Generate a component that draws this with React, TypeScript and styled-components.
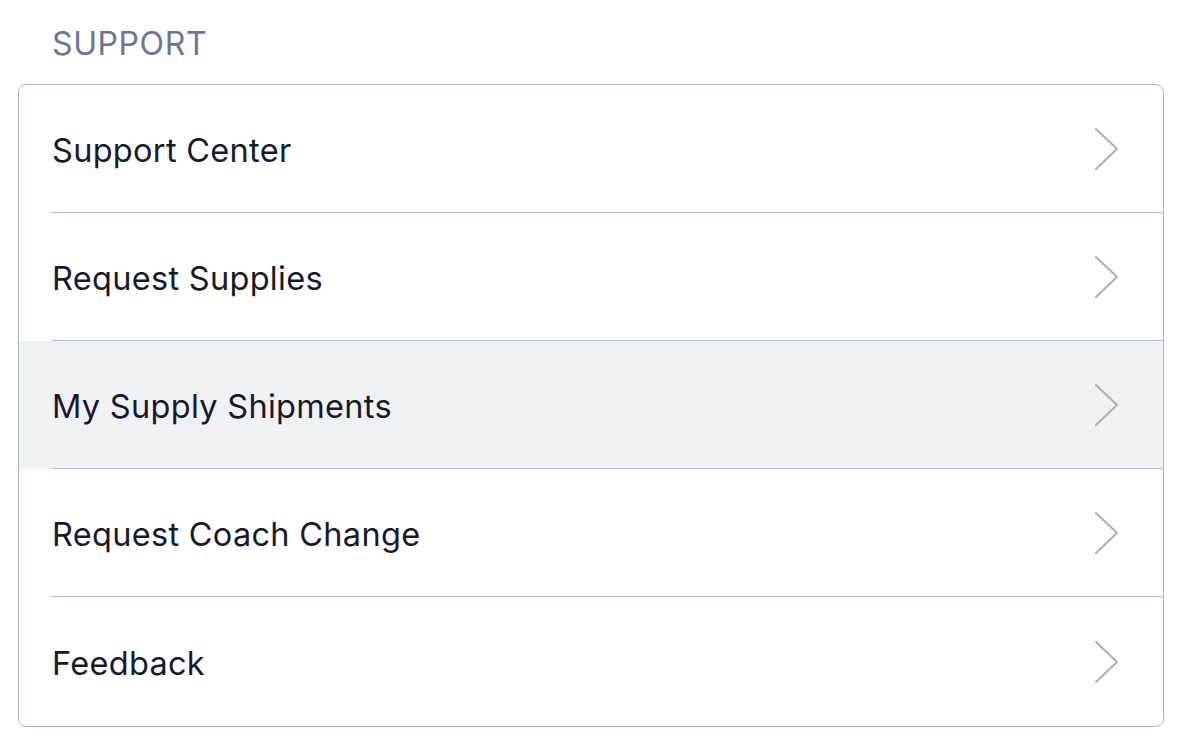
import React from "react";
import styled, { createGlobalStyle } from "styled-components";

const Global = createGlobalStyle`
  html, body { margin: 0; padding: 0; background: #ffffff; }
  body { font-family: Inter, "Noto Sans", sans-serif; }
`;

const Page = styled.div`
  padding: 24px 16px 0 18px;
`;

const Heading = styled.h2`
  margin: 0 0 20px 34px;
  font-family: Inter, "Noto Sans", sans-serif;
  font-weight: 400;
  font-size: 32px;
  line-height: 40px;
  letter-spacing: 0.6px;
  color: #66779a;
`;

const Card = styled.div`
  border: 1px solid #aeb7c9;
  border-radius: 8px;
  overflow: hidden;
  background: #ffffff;
`;

const Row = styled.div<{ $active?: boolean }>`
  padding-left: 33px;
  background: ${(p) => (p.$active ? "#f0f1f3" : "transparent")};
`;

const RowInner = styled.div<{ $last?: boolean }>`
  height: ${(p) => (p.$last ? "129px" : "127px")};
  display: flex;
  align-items: center;
  justify-content: space-between;
  padding-right: 42px;
  border-bottom: ${(p) => (p.$last ? "none" : "1px solid #b4bccd")};
`;

const Label = styled.span`
  padding-top: 4px;
  font-family: Inter, "Noto Sans", sans-serif;
  font-size: 32.5px;
  font-weight: 400;
  letter-spacing: 0.3px;
  color: #171a2b;
`;

const Chevron = () => (
  <svg width="28" height="46" viewBox="0 0 28 46" fill="none">
    <polyline
      points="3,3 24,23 3,43"
      stroke="#b3b3b3"
      strokeWidth="2.2"
      strokeLinecap="round"
      strokeLinejoin="round"
    />
  </svg>
);

const items = [
  "Support Center",
  "Request Supplies",
  "My Supply Shipments",
  "Request Coach Change",
  "Feedback",
];

export default function App() {
  return (
    <Page>
      <Global />
      <Heading>SUPPORT</Heading>
      <Card>
        {items.map((it, i) => (
          <Row key={it} $active={i === 2}>
            <RowInner $last={i === items.length - 1}>
              <Label>{it}</Label>
              <Chevron />
            </RowInner>
          </Row>
        ))}
      </Card>
    </Page>
  );
}
